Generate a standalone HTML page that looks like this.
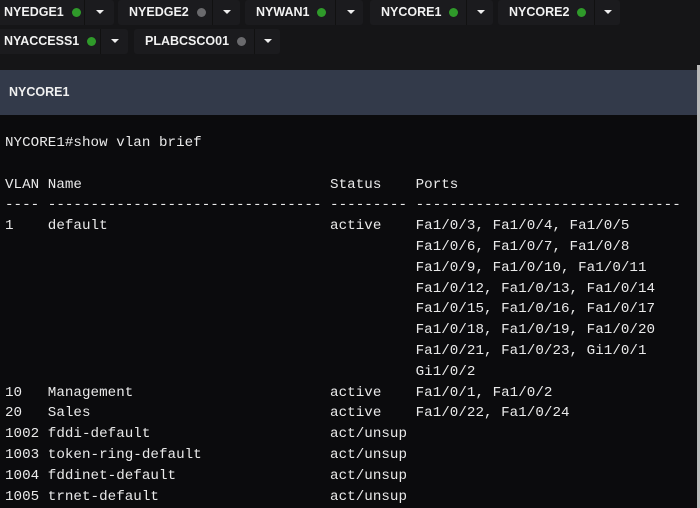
<!DOCTYPE html>
<html><head><style>
body{margin:0;width:700px;height:508px;background:#151517;overflow:hidden;position:relative;font-family:"Liberation Sans",sans-serif}
.tab{position:absolute;height:25px;background:#1b1b1e;border-radius:3px;color:#f2f2f2;font-weight:bold;font-size:12.5px;line-height:25px}
.tab .l{position:absolute;left:4px;top:0}
.dot{display:inline-block;width:9px;height:9px;border-radius:50%;margin-left:8px;vertical-align:-1px}
.g{background:#2f9a2a}.x{background:#6a6a6d}
.arr{position:absolute;top:10px;width:0;height:0;border-left:4px solid transparent;border-right:4px solid transparent;border-top:4px solid #eee}
.sep{position:absolute;top:0;width:1px;height:25px;background:#111}
.hdr{position:absolute;left:0;top:70px;width:698px;height:45px;background:#333a4a;color:#f0f0f0;font-weight:bold;font-size:12.5px;line-height:45px;padding-left:9px;box-sizing:border-box}
.term{position:absolute;left:0;top:115px;width:698px;height:393px;background:#0b0b0d}
pre{position:absolute;left:5px;top:133px;margin:0;font-family:"Liberation Mono",monospace;font-size:14.2px;letter-spacing:0.04px;line-height:20.8px;color:#eaeaea}
.edge{position:absolute;left:697px;top:65px;width:3px;height:443px;background:#bbb}
</style></head><body>
<div class="tab" style="left:0;top:0;width:114px;border-radius:0 3px 3px 0"><span class="l">NYEDGE1<span class="dot g"></span></span><div class="sep" style="left:84px"></div><div class="arr" style="left:96px"></div></div>
<div class="tab" style="left:118px;top:0;width:122px"><span class="l" style="left:11px">NYEDGE2<span class="dot x"></span></span><div class="sep" style="left:94px"></div><div class="arr" style="left:105px"></div></div>
<div class="tab" style="left:245px;top:0;width:118px"><span class="l" style="left:11px">NYWAN1<span class="dot g"></span></span><div class="sep" style="left:90px"></div><div class="arr" style="left:102px"></div></div>
<div class="tab" style="left:370px;top:0;width:123px"><span class="l" style="left:11px">NYCORE1<span class="dot g"></span></span><div class="sep" style="left:96px"></div><div class="arr" style="left:107px"></div></div>
<div class="tab" style="left:498px;top:0;width:122px"><span class="l" style="left:11px">NYCORE2<span class="dot g"></span></span><div class="sep" style="left:96px"></div><div class="arr" style="left:106px"></div></div>
<div class="tab" style="left:0;top:29px;width:128px;border-radius:0 3px 3px 0"><span class="l">NYACCESS1<span class="dot g"></span></span><div class="sep" style="left:100px"></div><div class="arr" style="left:111px"></div></div>
<div class="tab" style="left:134px;top:29px;width:146px"><span class="l" style="left:11px">PLABCSCO01<span class="dot x"></span></span><div class="sep" style="left:120px"></div><div class="arr" style="left:130px"></div></div>
<div class="hdr">NYCORE1</div>
<div class="term"></div>
<div class="edge"></div>
<pre>NYCORE1#show vlan brief

VLAN Name                             Status    Ports
---- -------------------------------- --------- -------------------------------
1    default                          active    Fa1/0/3, Fa1/0/4, Fa1/0/5
                                                Fa1/0/6, Fa1/0/7, Fa1/0/8
                                                Fa1/0/9, Fa1/0/10, Fa1/0/11
                                                Fa1/0/12, Fa1/0/13, Fa1/0/14
                                                Fa1/0/15, Fa1/0/16, Fa1/0/17
                                                Fa1/0/18, Fa1/0/19, Fa1/0/20
                                                Fa1/0/21, Fa1/0/23, Gi1/0/1
                                                Gi1/0/2
10   Management                       active    Fa1/0/1, Fa1/0/2
20   Sales                            active    Fa1/0/22, Fa1/0/24
1002 fddi-default                     act/unsup
1003 token-ring-default               act/unsup
1004 fddinet-default                  act/unsup
1005 trnet-default                    act/unsup</pre>
</body></html>
